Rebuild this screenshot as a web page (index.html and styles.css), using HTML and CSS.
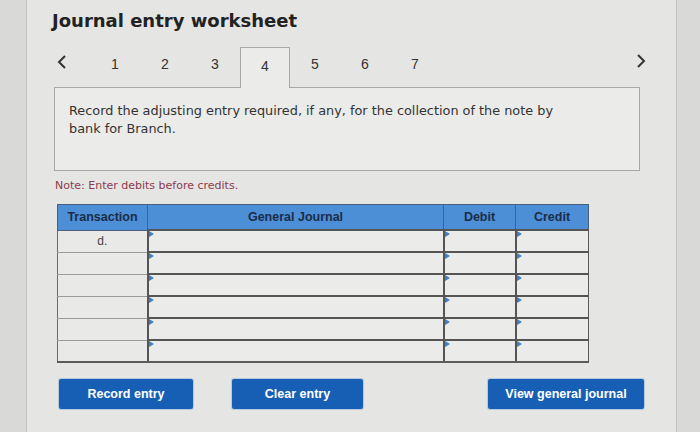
FILE: index.html
```html
<!DOCTYPE html>
<html>
<head>
<meta charset="utf-8">
<link rel="stylesheet" href="styles.css">
</head>
<body>
<div class="panel">
  <h1 class="title">Journal entry worksheet</h1>
  <div class="tabs">
    <span class="arrow prev"><svg width="12" height="16" viewBox="0 0 12 16"><path d="M9 2 L3 8 L9 14" fill="none" stroke="#333" stroke-width="2"/></svg></span>
    <span class="tab">1</span>
    <span class="tab">2</span>
    <span class="tab">3</span>
    <span class="tab active">4</span>
    <span class="tab">5</span>
    <span class="tab">6</span>
    <span class="tab">7</span>
    <span class="spacer"></span>
    <span class="arrow next"><svg width="12" height="16" viewBox="0 0 12 16"><path d="M3 2 L9 8 L3 14" fill="none" stroke="#333" stroke-width="2"/></svg></span>
  </div>
  <div class="question">Record the adjusting entry required, if any, for the collection of the note by bank for Branch.</div>
  <div class="note">Note: Enter debits before credits.</div>
  <table class="journal">
    <thead>
      <tr><th class="c-tr">Transaction</th><th class="c-gj">General Journal</th><th class="c-dr">Debit</th><th class="c-cr">Credit</th></tr>
    </thead>
    <tbody>
      <tr><td class="tx">d.</td><td class="in"></td><td class="in"></td><td class="in"></td></tr>
      <tr><td class="tx"></td><td class="in"></td><td class="in"></td><td class="in"></td></tr>
      <tr><td class="tx"></td><td class="in"></td><td class="in"></td><td class="in"></td></tr>
      <tr><td class="tx"></td><td class="in"></td><td class="in"></td><td class="in"></td></tr>
      <tr><td class="tx"></td><td class="in"></td><td class="in"></td><td class="in"></td></tr>
      <tr><td class="tx"></td><td class="in"></td><td class="in"></td><td class="in"></td></tr>
    </tbody>
  </table>
  <div class="buttons">
    <button class="btn b-record">Record entry</button>
    <button class="btn b-clear">Clear entry</button>
    <span class="spacer"></span>
    <button class="btn b-view">View general journal</button>
  </div>
</div>
</body>
</html>
```

FILE: styles.css
```css
html, body {
  margin: 0;
  padding: 0;
  background: #d9d9d7;
}
body {
  width: 700px;
  height: 432px;
  overflow: hidden;
  font-family: "DejaVu Sans", Verdana, sans-serif;
}
.panel {
  margin-left: 26px;
  width: 651px;
  height: 432px;
  background: #e5e5e3;
  border-left: 1px solid #c2c2c0;
  border-right: 1px solid #c2c2c0;
  box-sizing: border-box;
  padding-top: 9px;
}
.title {
  margin: 0 0 0 25px;
  font-size: 18px;
  font-weight: bold;
  color: #222;
  line-height: 24px;
}
.tabs {
  display: flex;
  align-items: stretch;
  margin-top: 14px;
  margin-left: 23px;
  width: 606px;
  height: 40px;
}
.arrow {
  display: flex;
  align-items: center;
  justify-content: center;
  width: 25px;
  padding-bottom: 11px;
  box-sizing: border-box;
}
.arrow.prev { width: 40px; justify-content: flex-start; padding-left: 6px; }
.arrow.next { width: 30px; padding-bottom: 13px; }
.tab {
  width: 50px;
  display: flex;
  align-items: center;
  justify-content: center;
  padding-bottom: 6px;
  box-sizing: border-box;
  font-family: "Liberation Sans", Arial, sans-serif;
  font-size: 14px;
  color: #333;
}
.tab.active {
  background: #ebebe9;
  border: 1px solid #a8a8a6;
  border-bottom: none;
  position: relative;
  z-index: 1;
  height: 41px;
  padding-bottom: 4px;
}
.spacer { flex: 1; }
.question {
  margin-left: 27px;
  width: 586px;
  height: 84px;
  box-sizing: border-box;
  background: #ebebe9;
  border: 1px solid #a8a8a6;
  padding: 14px 80px 12px 14px;
  font-size: 12.85px;
  line-height: 18px;
  color: #333;
}
.note {
  margin: 8px 0 0 28px;
  font-size: 11px;
  line-height: 14px;
  color: #8c3b4e;
}
.journal {
  margin: 11px 0 0 30px;
  border-collapse: collapse;
  width: 532px;
  font-family: "Liberation Sans", Arial, sans-serif;
}
.journal th {
  background: #4d8fd6;
  color: #1c2c48;
  font-size: 12.5px;
  font-weight: bold;
  height: 24px;
  padding: 0;
  border: 1px solid #4a5f7a;
}
.c-tr { width: 89px; }
.c-gj { width: 295px; }
.c-dr { width: 71px; }
.c-cr { width: 72px; }
.journal td {
  height: 20px;
  padding: 0;
  background: #ebebe9;
  border: 1px solid #5b5b5b;
}
.journal td.tx {
  border-color: #9a9a9a;
  font-size: 12px;
  color: #444;
  text-align: center;
  vertical-align: middle;
  background: #e9e9e7;
}
.journal td.tx:first-child { border-left-color: #6a6a6a; }
.journal td.in {
  position: relative;
  border-top: 2px solid #555;
  border-left: 2px solid #555;
}
.journal td.in::before {
  content: "";
  position: absolute;
  left: 0;
  top: 0;
  border-top: 3px solid transparent;
  border-bottom: 3px solid transparent;
  border-left: 5px solid #3d7ec7;
}
.journal tbody tr:last-child td { border-bottom: 2px solid #5b5b5b; }
.buttons {
  display: flex;
  margin: 16px 0 0 32px;
  width: 585px;
}
.btn {
  height: 30px;
  border: none;
  border-radius: 2px;
  background: #175fb5;
  color: #fff;
  font-family: "Liberation Sans", Arial, sans-serif;
  font-weight: bold;
  font-size: 12.5px;
  padding: 0;
  box-shadow: 0 0 0 1px #b8c8dc;
}
.b-record { width: 134px; }
.b-clear { width: 131px; margin-left: 39px; }
.b-view { width: 156px; }
```
